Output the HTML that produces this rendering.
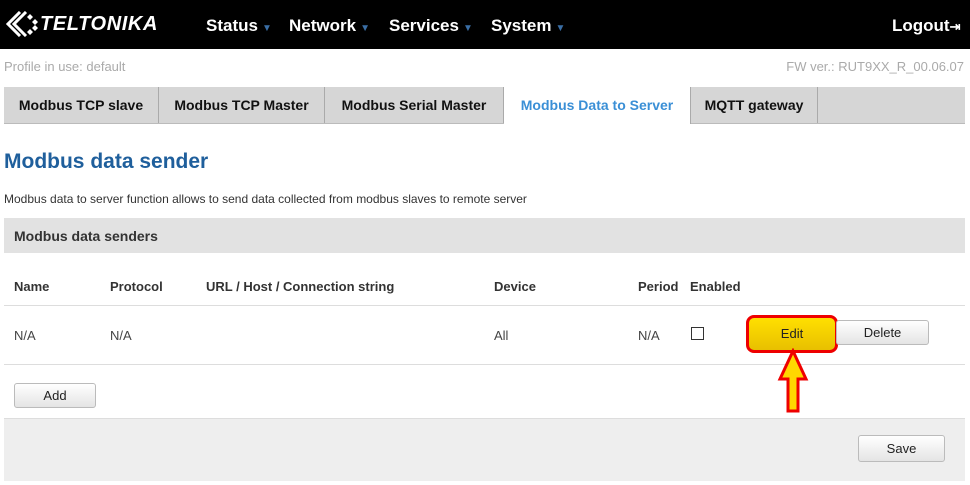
<!DOCTYPE html>
<html><head><style>
body{margin:0;width:970px;height:485px;background:#fff;font-family:"Liberation Sans",Arial,sans-serif;position:relative;overflow:hidden}
.a{position:absolute}
.hdr{left:0;top:0;width:970px;height:49px;background:#000}
.nav{color:#fff;font-weight:bold;font-size:17px;top:16px}
.car{color:#3a6ea5;font-size:10px;margin-left:4px}
.tabs{left:4px;top:87px;width:961px;height:36px;background:#d6d6d6;border-bottom:1px solid #bbb}
.tab{position:absolute;top:0;height:36px;line-height:36px;font-weight:bold;font-size:14px;color:#111;text-align:center;border-right:1px solid #aaa}
.btn{position:absolute;border:1px solid #bbb;border-radius:3px;background:linear-gradient(#fff,#e4e4e4);font-size:13px;color:#222;text-align:center}
.th{font-weight:bold;font-size:13px;color:#333;top:279px}
.td{font-size:13px;color:#444;top:328px}
</style></head><body>
<div class="a hdr"></div>
<svg class="a" style="left:6px;top:11px" width="34" height="26" viewBox="0 0 34 26"><path d="M14 1 L2 13 L14 25 M20 1 L8 13 L20 25" stroke="#fff" stroke-width="3" fill="none"/><path d="M24 3l3 3-3 3-3-3zM29 8l3 3-3 3-3-3zM29 14l3 3-3 3-3-3zM24 18l3 3-3 3-3-3z" fill="#fff"/></svg>
<div class="a" style="left:40px;top:13px;color:#fff;font-weight:900;font-style:italic;font-size:20px;letter-spacing:0.6px">TELTONIKA</div>
<div class="a nav" style="left:206px">Status<span class="car">▼</span></div>
<div class="a nav" style="left:289px">Network<span class="car">▼</span></div>
<div class="a nav" style="left:389px">Services<span class="car">▼</span></div>
<div class="a nav" style="left:491px">System<span class="car">▼</span></div>
<div class="a nav" style="left:892px">Logout<span style="font-size:13px">⇥</span></div>
<div class="a" style="left:4px;top:59px;font-size:13px;color:#aaa">Profile in use: default</div>
<div class="a" style="right:6px;top:59px;font-size:13px;color:#aaa">FW ver.: RUT9XX_R_00.06.07</div>
<div class="a tabs">
<div class="tab" style="left:0;width:154px">Modbus TCP slave</div>
<div class="tab" style="left:155px;width:165px">Modbus TCP Master</div>
<div class="tab" style="left:321px;width:178px">Modbus Serial Master</div>
<div class="tab" style="left:500px;width:186px;background:#fff;color:#3a8fd6;height:37px;font-weight:bold">Modbus Data to Server</div>
<div class="tab" style="left:687px;width:126px">MQTT gateway</div>
</div>
<div class="a" style="left:4px;top:150px;font-size:21px;font-weight:bold;color:#1f5f9c">Modbus data sender</div>
<div class="a" style="left:4px;top:192px;font-size:12px;color:#333">Modbus data to server function allows to send data collected from modbus slaves to remote server</div>
<div class="a" style="left:4px;top:218px;width:961px;height:35px;background:#e2e2e2"></div>
<div class="a" style="left:14px;top:228px;font-size:14px;font-weight:bold;color:#333">Modbus data senders</div>
<div class="a" style="left:4px;top:305px;width:961px;height:1px;background:#ddd"></div>
<div class="a" style="left:4px;top:364px;width:961px;height:1px;background:#ddd"></div>
<div class="a" style="left:4px;top:418px;width:961px;height:62px;background:#eee;border-top:1px solid #ddd"></div>
<div class="a th" style="left:14px">Name</div>
<div class="a th" style="left:110px">Protocol</div>
<div class="a th" style="left:206px">URL / Host / Connection string</div>
<div class="a th" style="left:494px">Device</div>
<div class="a th" style="left:638px">Period</div>
<div class="a th" style="left:690px">Enabled</div>
<div class="a td" style="left:14px">N/A</div>
<div class="a td" style="left:110px">N/A</div>
<div class="a td" style="left:494px">All</div>
<div class="a td" style="left:638px">N/A</div>
<div class="a" style="left:691px;top:327px;width:11px;height:11px;border:1px solid #333"></div>
<div class="a" style="left:746px;top:315px;width:86px;height:32px;border:3px solid #e00;border-radius:8px;background:linear-gradient(#ffe000,#e8c000);font-size:13px;text-align:center;line-height:32px;color:#222">Edit</div>
<div class="btn" style="left:836px;top:320px;width:91px;height:23px;line-height:23px">Delete</div>
<svg class="a" style="left:776px;top:348px" width="34" height="66" viewBox="0 0 34 66"><path d="M17 3 L30 31 L22 31 L22 63 L12 63 L12 31 L4 31 Z" fill="#ffd700" stroke="#e00" stroke-width="3"/></svg>
<div class="btn" style="left:14px;top:383px;width:80px;height:23px;line-height:23px">Add</div>
<div class="btn" style="left:858px;top:435px;width:85px;height:25px;line-height:25px">Save</div>
</body></html>
